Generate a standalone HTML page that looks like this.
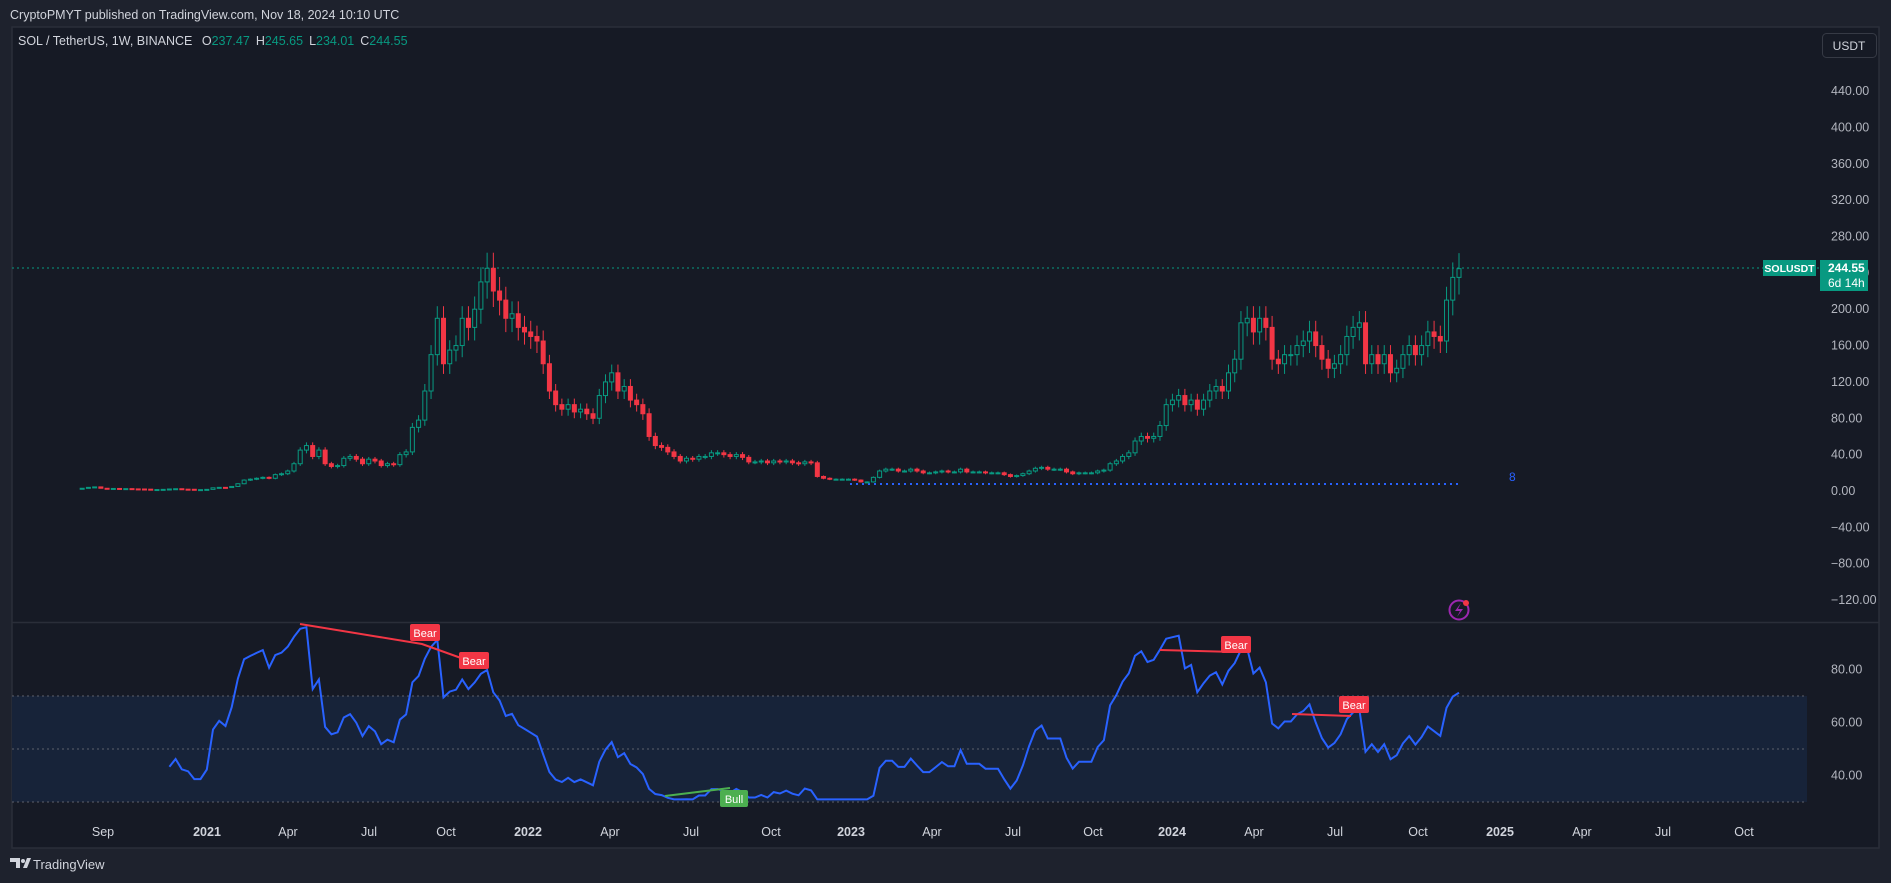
<!DOCTYPE html>
<html><head><meta charset="utf-8"><style>
html,body{margin:0;padding:0;background:#1e222d;width:1891px;height:883px;overflow:hidden;font-family:"Liberation Sans",sans-serif}
svg{position:absolute;left:0;top:0}
</style></head><body>
<svg id="s" width="1891" height="883" xmlns="http://www.w3.org/2000/svg" font-family="Liberation Sans, sans-serif">
<rect x="0" y="0" width="1891" height="883" fill="#1e222d"/>
<text x="10" y="19" fill="#d1d4dc" font-size="12.5">CryptoPMYT published on TradingView.com, Nov 18, 2024 10:10 UTC</text>
<rect x="12" y="27" width="1867" height="821" fill="#161a25" stroke="#2a2e39" stroke-width="1.5"/>
<line x1="12" y1="622.5" x2="1879" y2="622.5" stroke="#2a2e39" stroke-width="1.5"/>
<text x="18" y="45" fill="#d1d4dc" font-size="12.5">SOL / TetherUS, 1W, BINANCE  <tspan dx="6">O</tspan><tspan fill="#089981">237.47</tspan><tspan dx="6">H</tspan><tspan fill="#089981">245.65</tspan><tspan dx="6">L</tspan><tspan fill="#089981">234.01</tspan><tspan dx="6">C</tspan><tspan fill="#089981">244.55</tspan></text>
<rect x="1822.5" y="33.5" width="54" height="24" rx="4" fill="#161a25" stroke="#363a45"/>
<text x="1849" y="50" fill="#d1d4dc" font-size="12" text-anchor="middle">USDT</text>
<g fill="#b2b5be" font-size="12.5" id="ax"></g>
<rect x="12" y="696" width="1795" height="106" fill="#172339"/>
<g stroke="#5d606b" stroke-dasharray="2,3" stroke-width="1">
<line x1="12" y1="696" x2="1807" y2="696"/><line x1="12" y1="749" x2="1807" y2="749"/><line x1="12" y1="802" x2="1807" y2="802"/></g>
<line x1="12" y1="268" x2="1820" y2="268" stroke="#089981" stroke-dasharray="2,3"/>
<line x1="850" y1="484" x2="1459" y2="484" stroke="#2962ff" stroke-width="2" stroke-dasharray="2,4"/>
<text x="1509" y="481" fill="#2962ff" font-size="12">8</text>
<g id="c"></g>
<polyline id="rsi" fill="none" stroke="#2962ff" stroke-width="2"/>
<g stroke-width="2">
<polyline points="300,624 422,644 461,658" fill="none" stroke="#f23645"/>
<line x1="665" y1="796" x2="730" y2="788" stroke="#4caf50"/>
<line x1="1160" y1="650" x2="1236" y2="652" stroke="#f23645"/>
<line x1="1292" y1="714" x2="1351" y2="716" stroke="#f23645"/>
</g>
<g font-size="11" fill="#fff" text-anchor="middle">
<rect x="410" y="624" width="30" height="17" rx="2" fill="#f23645"/><text x="425" y="637">Bear</text>
<rect x="459" y="652" width="30" height="17" rx="2" fill="#f23645"/><text x="474" y="665">Bear</text>
<rect x="720" y="790" width="28" height="17" rx="2" fill="#4caf50"/><text x="734" y="803">Bull</text>
<rect x="1221" y="636" width="30" height="17" rx="2" fill="#f23645"/><text x="1236" y="649">Bear</text>
<rect x="1339" y="696" width="30" height="17" rx="2" fill="#f23645"/><text x="1354" y="709">Bear</text>
</g>
<circle cx="1459" cy="610" r="9.5" fill="none" stroke="#9c27b0" stroke-width="2"/>
<path d="M1461 603 L1455 611 L1460 611 L1457 617 L1463 609 L1458 609 Z" fill="#9c27b0"/>
<circle cx="1466" cy="603" r="3" fill="#f23645"/>
<rect x="1763" y="260" width="53" height="16" fill="#089981"/>
<text x="1789.5" y="272" fill="#fff" font-size="10.5" font-weight="bold" text-anchor="middle">SOLUSDT</text>
<rect x="1820" y="260" width="48" height="31" fill="#089981"/>
<text x="1828" y="272" fill="#fff" font-size="12" font-weight="bold">244.55</text>
<text x="1828" y="287" fill="#fff" font-size="12">6d 14h</text>
<g fill="#d1d4dc" font-size="12.5" id="tx"></g>
<g transform="translate(10,858)"><path d="M0 0h10v10h-4v-6h-6z" fill="#d1d4dc"/><circle cx="13" cy="3" r="2" fill="#d1d4dc"/><path d="M13 10l4-10h4l-4 10z" fill="#d1d4dc"/></g>
<text x="33" y="869" fill="#d1d4dc" font-size="13">TradingView</text>
</svg>
<script>
var NS="http://www.w3.org/2000/svg";
function el(t,a,p,txt){var e=document.createElementNS(NS,t);for(var k in a)e.setAttribute(k,a[k]);if(txt)e.textContent=txt;p.appendChild(e);return e;}
var ax=document.getElementById('ax');
for(var p=440;p>=-120;p-=40){el('text',{x:1831,y:491-p*0.909+4},ax,(p<0?'\u2212'+(-p):p)+'.00');}
[80,60,40].forEach(function(r){el('text',{x:1831,y:749-(r-50)*2.65+4},ax,r+'.00');});
var tx=document.getElementById('tx');
[["Sep",103],["2021",207],["Apr",288],["Jul",369],["Oct",446],["2022",528],["Apr",610],["Jul",691],["Oct",771],["2023",851],["Apr",932],["Jul",1013],["Oct",1093],["2024",1172],["Apr",1254],["Jul",1335],["Oct",1418],["2025",1500],["Apr",1582],["Jul",1663],["Oct",1744]].forEach(function(a){var t=el('text',{x:a[1],y:836,'text-anchor':'middle'},tx,a[0]);if(a[0].length==4)t.setAttribute('font-weight','bold');});
var C=[3,4,4.5,3,2.5,2.8,2.4,2.6,2.3,2.2,2.0,1.6,1.6,1.8,2.2,2.5,2.0,1.9,1.5,1.5,1.8,
3.5,4,3.8,5,8,12,13,14,15,14,18,19,22,30,45,50,38,45,30,27,28,36,38,35,30,35,33,28,30,29,40,43,70,78,110,150,190,140,155,160,190,180,200,230,245,220,210,190,195,180,175,170,
165,140,110,95,90,95,87,90,85,80,105,120,130,110,115,100,95,85,60,50,48,43,38,33,36,35,38,38,42,42,40,38,40,37,32,32,33,31,33,32,33,31,30,32,31,16,14,13,13,13,13,12,10,10,
15,22,24,24,22,22,24,22,20,20,21,22,21,21,24,21,21,21,20,20,20,18,16,17,19,22,25,26,24,24,24,21,19,20,20,20,22,23,30,33,38,42,55,60,58,60,72,95,100,105,
95,100,90,100,110,115,110,130,145,185,190,175,190,180,145,140,150,150,160,165,175,160,145,135,140,150,170,180,185,140,150,140,150,130,135,150,160,150,160,175,170,165,210,235,244.55];
var N=C.length,g=document.getElementById('c'),W=6.23;
function Y(p){return 491-p*0.909;}
for(var i=0;i<N;i++){var x=1459-(N-1-i)*W,o=i?C[i-1]:C[0]*0.9,c=C[i],hi=Math.max(o,c)*1.07,lo=Math.min(o,c)*0.92;
var up=c>=o,col=up?"#089981":"#f23645";
el('line',{x1:x,y1:Y(hi),x2:x,y2:Y(lo),stroke:col,'stroke-width':1},g);
var t=Y(Math.max(o,c)),b=Y(Math.min(o,c));if(b-t<1)b=t+1;
el('rect',{x:x-2,y:t,width:4,height:b-t,fill:up?"#161a25":col,stroke:col,'stroke-width':1},g);}
var ag=0,al=0,pts=[];
for(var i=1;i<N;i++){var d=C[i]-C[i-1],gg=Math.max(d,0),ll=Math.max(-d,0);
if(i<=14){ag+=gg/14;al+=ll/14;}else{ag=(ag*13+gg)/14;al=(al*13+ll)/14;}
if(i>=14){var r=al==0?100:100-100/(1+ag/al);r=Math.max(31,Math.min(98,r));var x=1459-(N-1-i)*W;pts.push(x.toFixed(1)+","+(749-(r-50)*2.65).toFixed(1));}}
document.getElementById('rsi').setAttribute('points',pts.join(' '));
</script>
</body></html>
